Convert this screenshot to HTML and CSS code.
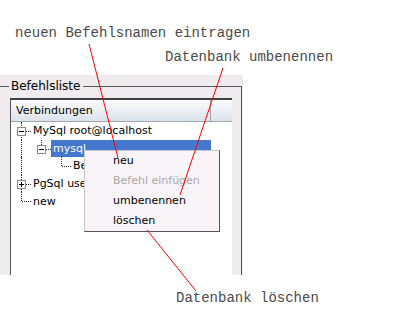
FILE: index.html
```html
<!DOCTYPE html>
<html lang="de">
<head>
    <meta charset="UTF-8">
    <meta name="viewport" content="width=device-width, initial-scale=1.0">
    <title>Befehlsliste</title>
    <link rel="stylesheet" href="styles.css">
</head>
<body>
    <p class="note note-new">neuen Befehlsnamen eintragen</p>
    <p class="note note-rename">Datenbank umbenennen</p>

    <div class="panel">
        <fieldset class="group">
            <legend>Befehlsliste</legend>
            <div class="tree-box">
                <div class="tree-head">
                    <div class="head-cell head-main">Verbindungen</div>
                    <div class="head-cell"></div>
                </div>
                <div class="tree">
                    <div class="row">
                        <span class="joint tee"><span class="toggle"></span></span>
                        <span class="label">MySql root@localhost</span>
                    </div>
                    <div class="row">
                        <span class="guide line"></span>
                        <span class="joint elbow"><span class="toggle"></span></span>
                        <span class="label selected">mysql</span>
                    </div>
                    <div class="row">
                        <span class="guide line"></span>
                        <span class="guide"></span>
                        <span class="joint elbow"></span>
                        <span class="label">Befehle</span>
                    </div>
                    <div class="row">
                        <span class="joint tee"><span class="toggle plus"></span></span>
                        <span class="label">PgSql user@localhost</span>
                    </div>
                    <div class="row">
                        <span class="joint elbow"></span>
                        <span class="label">new</span>
                    </div>
                </div>
            </div>
        </fieldset>
    </div>

    <p class="note note-delete">Datenbank löschen</p>

    <ul class="menu">
        <li>neu</li>
        <li class="disabled">Befehl einfügen</li>
        <li>umbenennen</li>
        <li>löschen</li>
    </ul>

    <svg class="pointers" width="400" height="331" viewBox="0 0 400 331">
        <line x1="89" y1="44" x2="118" y2="158" />
        <line x1="223" y1="68" x2="180" y2="195" />
        <line x1="147" y1="230" x2="196" y2="291" />
    </svg>
</body>
</html>
```

FILE: styles.css
```css
body {
    margin: 0;
    width: 400px;
    height: 331px;
    overflow: hidden;
    position: relative;
    background-color: #fff;
    font-family: "DejaVu Sans", sans-serif;
    font-size: 11px;
    color: #000;
}

.note {
    margin: 0;
    font-family: "Liberation Mono", monospace;
    font-size: 14px;
    line-height: 16px;
    color: #4a4a4a;
    white-space: pre;
}

.note-new {
    margin-top: 25px;
    padding-left: 15px;
}

.note-rename {
    margin-top: 8px;
    padding-left: 165px;
}

.note-delete {
    margin-top: 15px;
    padding-left: 176px;
}

.panel {
    margin-top: 10px;
    width: 243px;
    height: 200px;
    padding-top: 4px;
    box-sizing: border-box;
    background-color: #efebef;
    overflow: hidden;
}

.group {
    margin: 0;
    padding: 0;
    width: 242px;
    height: 220px;
    box-sizing: border-box;
    border: 1px solid #555;
    border-left: none;
    border-bottom: none;
}

.group legend {
    margin-left: 9px;
    padding: 0 3px 0 2px;
    font-size: 12px;
    line-height: 14px;
}

.tree-box {
    margin: 5px 0 0 10px;
    width: 222px;
    height: 200px;
    box-sizing: border-box;
    border-left: 1px solid #555;
    border-top: 2px solid #404040;
    background-color: #fff;
}

.tree-head {
    display: flex;
    height: 22px;
    box-sizing: border-box;
    border-bottom: 1px solid #a4a8ae;
    background: linear-gradient(#fbfcfd, #dbe2ea);
}

.head-cell {
    flex: 1;
    line-height: 21px;
}

.head-main {
    flex: none;
    width: 200px;
    box-sizing: border-box;
    padding-left: 5px;
    border-right: 1px solid #a0a4a8;
}

.row {
    display: flex;
    align-items: center;
    height: 17.6px;
}

.guide,
.joint {
    position: relative;
    flex: none;
    width: 20px;
    height: 100%;
}

.guide.line::before,
.joint::before {
    content: "";
    position: absolute;
    left: 10px;
    top: 0;
    bottom: 0;
    border-left: 1px dotted #222;
}

.joint.elbow::before {
    bottom: auto;
    height: 9px;
}

.joint::after {
    content: "";
    position: absolute;
    left: 11px;
    right: 0;
    top: 9px;
    border-top: 1px dotted #222;
}

.toggle {
    position: absolute;
    z-index: 1;
    left: 6px;
    top: 5px;
    width: 9px;
    height: 9px;
    box-sizing: border-box;
    border: 1px solid #8a8a8a;
    background-color: #fff;
}

.toggle::before {
    content: "";
    position: absolute;
    left: 1px;
    top: 3px;
    width: 5px;
    height: 1px;
    background-color: #000;
}

.toggle.plus::after {
    content: "";
    position: absolute;
    left: 3px;
    top: 1px;
    width: 1px;
    height: 5px;
    background-color: #000;
}

.label {
    padding: 0 2px;
    line-height: 17px;
    white-space: nowrap;
}

.label.selected {
    width: 156px;
    background-color: #4478ce;
    color: #fff;
}

.menu {
    position: absolute;
    left: 84px;
    top: 150px;
    width: 136px;
    margin: 0;
    padding: 0;
    list-style: none;
    box-sizing: border-box;
    border: 1px solid #55535a;
    border-left-color: #c9c5c9;
    border-top-color: #c9c5c9;
    background-color: #f8f4f8;
}

.menu li {
    height: 20px;
    line-height: 20px;
    padding-left: 28px;
}

.menu li.disabled {
    color: #aaa7aa;
}

.pointers {
    position: absolute;
    left: 0;
    top: 0;
    pointer-events: none;
}

.pointers line {
    stroke: #f00;
    stroke-width: 1;
}
```
